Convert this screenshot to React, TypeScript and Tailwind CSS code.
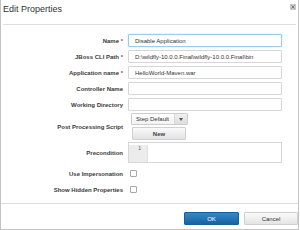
import React from "react";

function Label({ text, req }: { text: string; req?: boolean }) {
  return (
    <div className="w-[122px] text-right font-bold text-[6px] leading-none text-[#3a3a3a] shrink-0">
      {text}
      {req && <span className="text-[#e03030]"> *</span>}
    </div>
  );
}

function TextRow({
  label,
  value,
  req,
  focus,
  mt,
}: {
  label: string;
  value?: string;
  req?: boolean;
  focus?: boolean;
  mt: string;
}) {
  return (
    <div className={`flex items-center h-[13px] ${mt}`}>
      <Label text={label} req={req} />
      <div
        className={
          focus
            ? "ml-[5px] w-[154px] h-[13px] border border-[#9ccbe8] shadow-[0_0_2px_#b5dcf3] rounded-[1px] bg-white flex items-center pl-[6px] text-[6px] text-[#333] leading-none whitespace-nowrap overflow-hidden"
            : "ml-[5px] w-[154px] h-[13px] border border-[#d6d6d6] rounded-[1px] bg-white flex items-center pl-[6px] text-[6px] text-[#333] leading-none whitespace-nowrap overflow-hidden"
        }
      >
        {value}
      </div>
    </div>
  );
}

function CheckRow({ label, mt }: { label: string; mt: string }) {
  return (
    <div className={`flex items-center h-[13px] ${mt}`}>
      <Label text={label} />
      <div className="ml-[7px] w-[7px] h-[7px] border border-[#a8a8a8] rounded-[1px] bg-white" />
    </div>
  );
}

export default function App() {
  return (
    <div className="w-[300px] h-[230px] bg-white font-['Liberation_Sans',Arial,sans-serif]">
      <div className="w-[299px] h-[230px] border-x border-b border-[#c4c4c4] flex flex-col">
        <div className="mx-[2px] h-[25px] border-b border-[#dedede] flex justify-between items-start shrink-0">
          <div className="pt-[3px] text-[9px] leading-[12px] text-[#333]">Edit Properties</div>
          <svg className="mt-[4px]" width="6" height="6" viewBox="0 0 6 6">
            <rect x="0" y="0" width="6" height="6" fill="#c8c8c8" />
            <path d="M1.5 1.5 L4.5 4.5 M4.5 1.5 L1.5 4.5" stroke="#6e6e6e" strokeWidth="0.9" />
          </svg>
        </div>

        <div className="flex flex-col pt-[9px]">
          <TextRow label="Name" req focus value="Disable Application" mt="" />
          <TextRow
            label="JBoss CLI Path"
            req
            value="D:\wildfly-10.0.0.Final\wildfly-10.0.0.Final\bin"
            mt="mt-[3px]"
          />
          <TextRow label="Application name" req value="HelloWorld-Maven.war" mt="mt-[3px]" />
          <TextRow label="Controller Name" mt="mt-[3px]" />
          <TextRow label="Working Directory" mt="mt-[3px]" />

          <div className="flex items-center mt-[2px] h-[27px]">
            <Label text="Post Processing Script" />
            <div className="ml-[8px] flex flex-col">
              <div className="w-[57px] h-[12px] border border-[#cdcdcd] rounded-[1px] flex">
                <div className="flex-1 bg-gradient-to-b from-white to-[#f2f2f2] flex items-center pl-[4px] text-[6px] leading-none text-[#333] whitespace-nowrap">
                  Step Default
                </div>
                <div className="w-[13px] border-l border-[#d8d8d8] bg-gradient-to-b from-[#f0f0f0] to-[#dedede] flex items-center justify-center">
                  <svg width="4" height="3" viewBox="0 0 4 3">
                    <path d="M0 0 L4 0 L2 3 Z" fill="#555" />
                  </svg>
                </div>
              </div>
              <div className="mt-[2px] ml-[1px] w-[54px] h-[13px] border border-[#d0d0d0] rounded-[1px] bg-gradient-to-b from-[#fafafa] to-[#e2e2e2] flex items-center justify-center text-[6px] font-bold leading-none text-[#444]">
                New
              </div>
            </div>
          </div>

          <div className="flex items-center mt-[2px] h-[21px]">
            <Label text="Precondition" />
            <div className="ml-[5px] w-[154px] h-[21px] border border-[#d6d6d6] bg-white flex">
              <div className="mt-[2px] w-[19px] bg-[#ececec] border-r border-[#e0e0e0] text-[5px] leading-none text-[#555] text-right pr-[6px] pt-[1px]">
                1
              </div>
            </div>
          </div>

          <CheckRow label="Use Impersonation" mt="mt-[4px]" />
          <CheckRow label="Show Hidden Properties" mt="mt-[3px]" />
        </div>

        <div className="mt-[7px] flex-1 border-t border-[#dcdcdc] flex justify-end items-start pt-[8px] gap-[5px]">
          <div className="w-[55px] h-[13px] rounded-[1px] bg-gradient-to-b from-[#3589c6] to-[#15649f] border border-[#14609a] flex items-center justify-center text-[6px] leading-none text-white">
            OK
          </div>
          <div className="w-[54px] h-[13px] rounded-[1px] bg-gradient-to-b from-[#fbfbfb] to-[#e4e4e4] border border-[#cfcfcf] flex items-center justify-center text-[6px] leading-none text-[#333]">
            Cancel
          </div>
        </div>
      </div>
    </div>
  );
}
